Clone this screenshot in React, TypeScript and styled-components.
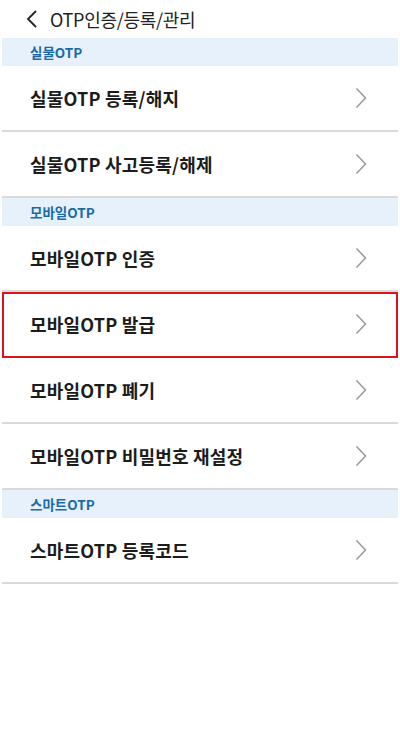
import styled, { createGlobalStyle } from 'styled-components';

const GlobalStyle = createGlobalStyle`
  html, body {
    margin: 0;
    padding: 0;
    background: #fff;
  }
  body {
    font-family: "Noto Sans CJK KR", "Noto Sans", sans-serif;
  }
`;

const Page = styled.div`
  width: 400px;
  min-height: 735px;
  padding: 0 2px;
  box-sizing: border-box;
  background: #fff;
`;

const Header = styled.div`
  height: 38px;
  display: flex;
  align-items: center;
  gap: 12px;
  padding-left: 24px;
`;

const BackButton = styled.button`
  border: 0;
  background: none;
  padding: 0;
  display: flex;
  align-items: center;
`;

const Title = styled.h1`
  margin: 0;
  font-size: 18px;
  font-weight: 400;
  color: #222;
  letter-spacing: -0.3px;
`;

const SectionHeader = styled.div`
  height: 28px;
  display: flex;
  align-items: center;
  padding-left: 28px;
  background: #e6f1fb;
  color: #1a6aa8;
  font-size: 13.5px;
  font-weight: 700;
`;

const Row = styled.div<{ $active?: boolean }>`
  height: 66px;
  box-sizing: border-box;
  display: flex;
  align-items: center;
  justify-content: space-between;
  padding: 0 31px 0 28px;
  border-bottom: 2px solid #dadada;
  outline: ${(p) => (p.$active ? '2px solid #d8141c' : 'none')};
  outline-offset: -2px;
`;

const RowLabel = styled.span`
  font-size: 18px;
  font-weight: 700;
  color: #1c1c1c;
  letter-spacing: 0.2px;
`;

const Chevron = () => (
  <svg width="12" height="22" viewBox="0 0 12 22">
    <polyline points="1.5,1.5 10.5,11 1.5,20.5" fill="none" stroke="#9c9c9c" strokeWidth="1.6" />
  </svg>
);

const sections = [
  { title: '실물OTP', items: ['실물OTP 등록/해지', '실물OTP 사고등록/해제'] },
  {
    title: '모바일OTP',
    items: ['모바일OTP 인증', '모바일OTP 발급', '모바일OTP 폐기', '모바일OTP 비밀번호 재설정'],
  },
  { title: '스마트OTP', items: ['스마트OTP 등록코드'] },
];

export default function App() {
  return (
    <>
      <GlobalStyle />
      <Page>
        <Header>
          <BackButton aria-label="back">
            <svg width="12" height="18" viewBox="0 0 12 18">
              <polyline points="10,1 2,9 10,17" fill="none" stroke="#222" strokeWidth="1.8" />
            </svg>
          </BackButton>
          <Title>OTP인증/등록/관리</Title>
        </Header>
        {sections.map((s) => (
          <section key={s.title}>
            <SectionHeader>{s.title}</SectionHeader>
            {s.items.map((item) => (
              <Row key={item} $active={item === '모바일OTP 발급'}>
                <RowLabel>{item}</RowLabel>
                <Chevron />
              </Row>
            ))}
          </section>
        ))}
      </Page>
    </>
  );
}
